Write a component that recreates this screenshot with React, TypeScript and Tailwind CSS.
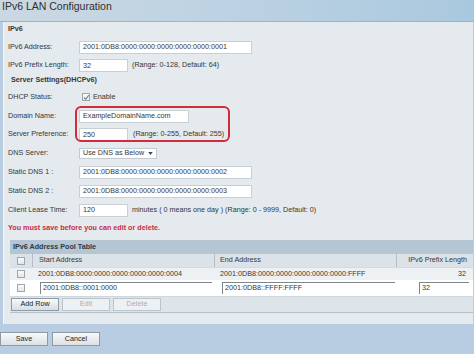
import React from "react";

const FONT = "font-['Liberation_Sans',Arial,sans-serif]";

function Check({ checked = false }: { checked?: boolean }) {
  return (
    <span className="relative inline-block h-[8px] w-[8px] shrink-0 border border-[#9ea7ae] bg-gradient-to-b from-[#fbfbfb] to-[#e3e6e8]">
      {checked && (
        <svg viewBox="0 0 8 8" className="absolute left-0 top-0 h-[7px] w-[7px]">
          <path d="M1.2 4.2 L3 6 L6.6 1.4" fill="none" stroke="#6f777d" strokeWidth="1.2" />
        </svg>
      )}
    </span>
  );
}

function Field({ w, value }: { w: string; value: string }) {
  return (
    <div className={`${w} flex h-[13px] shrink-0 items-center border border-[#c8cfd5] bg-white pl-[3px] leading-none`}>
      {value}
    </div>
  );
}

function Row({ h, label, children }: { h: string; label: string; children?: React.ReactNode }) {
  return (
    <div className={`${h} flex items-center`}>
      <div className="w-[75px] shrink-0 pl-[4px]">{label}</div>
      {children}
    </div>
  );
}

function Btn({ label, disabled = false, w = "w-[48px]" }: { label: string; disabled?: boolean; w?: string }) {
  return (
    <div
      className={`${w} flex h-[13px] items-center justify-center border ${
        disabled
          ? "border-[#bcc4ca] bg-[#eef1f3] text-[#a9afb4]"
          : "border-[#8f9ca6] bg-gradient-to-b from-[#f7f8f9] to-[#d9dee2] text-[#222]"
      }`}
    >
      {label}
    </div>
  );
}

export default function App() {
  return (
    <div className={`h-[354px] w-[474px] overflow-hidden bg-[#b8cde1] text-[7.2px] text-[#363636] ${FONT}`}>
      {/* title bar */}
      <div className="h-[22px] border-b border-[#9fb3c3] bg-gradient-to-r from-[#cbd8e2] via-[#bcd2e2] to-[#a9c8df] pl-[2px] text-[10.5px] leading-[13px] text-[#2f2f2f]">
        IPv6 LAN Configuration
      </div>

      {/* main panel */}
      <div className="ml-[3px] w-[470px] border-l border-[#f3f6f8] bg-[#e4eaee] pb-[11px]">
        <div className="flex h-[15px] items-center pl-[4px] font-bold">IPv6</div>
        <Row h="h-[20px]" label="IPv6 Address:">
          <Field w="w-[173px]" value="2001:0DB8:0000:0000:0000:0000:0000:0001" />
        </Row>
        <Row h="h-[17px]" label="IPv6 Prefix Length:">
          <Field w="w-[49px]" value="32" />
          <span className="ml-[4px]">(Range: 0-128, Default: 64)</span>
        </Row>
        <div className="flex h-[13px] items-center pl-[7px] font-bold">Server Settings(DHCPv6)</div>
        <Row h="h-[20px]" label="DHCP Status:">
          <span className="ml-[3px] flex items-center gap-[3px]">
            <Check checked />
            <span>Enable</span>
          </span>
        </Row>

        <div className="relative">
          <Row h="h-[18px]" label="Domain Name:">
            <Field w="w-[110px]" value="ExampleDomainName.com" />
          </Row>
          <Row h="h-[19px]" label="Server Preference:">
            <Field w="w-[49px]" value="250" />
            <span className="ml-[5px]">(Range: 0-255, Default: 255)</span>
          </Row>
          <div className="absolute left-[71px] top-[-1px] h-[36px] w-[155px] rounded-[6px] border-2 border-[#d42b3c]" />
        </div>

        <Row h="h-[18px]" label="DNS Server:">
          <div className="flex h-[11px] w-[78px] items-center border border-[#c3cad0] bg-white pl-[3px]">
            <span>Use DNS as Below</span>
            <svg viewBox="0 0 6 4" className="ml-[4px] h-[3px] w-[5px]">
              <path d="M0 0 H6 L3 4 Z" fill="#444" />
            </svg>
          </div>
        </Row>
        <Row h="h-[20px]" label="Static DNS 1 :">
          <Field w="w-[173px]" value="2001:0DB8:0000:0000:0000:0000:0000:0002" />
        </Row>
        <Row h="h-[18px]" label="Static DNS 2 :">
          <Field w="w-[173px]" value="2001:0DB8:0000:0000:0000:0000:0000:0003" />
        </Row>
        <Row h="h-[20px]" label="Client Lease Time:">
          <Field w="w-[49px]" value="120" />
          <span className="ml-[4px]">minutes ( 0 means one day ) (Range: 0 - 9999, Default: 0)</span>
        </Row>
        <div className="flex h-[17px] items-center pl-[4px] font-bold text-[#cc2a45]">
          You must save before you can edit or delete.
        </div>

        {/* pool table */}
        <div className="ml-[6px] mt-[3px] border-b border-[#b5c0c9]">
          <div className="flex h-[14px] items-center bg-[#b4c5d3] pl-[3px] font-bold text-[#2d3945]">
            IPv6 Address Pool Table
          </div>
          <div className="grid grid-cols-[23px_182px_182px_1fr]">
            <div className="flex h-[13px] items-center border-r border-[#b3bec7] bg-[#dbe3e9] pl-[7px]">
              <Check />
            </div>
            <div className="flex items-center border-r border-[#b3bec7] bg-[#dbe3e9] pl-[6px]">Start Address</div>
            <div className="flex items-center border-r border-[#b3bec7] bg-[#dbe3e9] pl-[5px]">End Address</div>
            <div className="flex items-center justify-end bg-[#dbe3e9] pr-[6px]">IPv6 Prefix Length</div>

            <div className="flex h-[13px] items-center border-t border-[#d3dae0] bg-[#edf1f4] pl-[7px]">
              <Check />
            </div>
            <div className="flex items-center border-t border-[#d3dae0] bg-[#edf1f4] pl-[5px]">
              2001:0DB8:0000:0000:0000:0000:0000:0004
            </div>
            <div className="flex items-center border-t border-[#d3dae0] bg-[#edf1f4] pl-[5px]">
              2001:0DB8:0000:0000:0000:0000:0000:FFFF
            </div>
            <div className="flex items-center justify-end border-t border-[#d3dae0] bg-[#edf1f4] pr-[7px]">32</div>

            <div className="flex h-[16px] items-center bg-white pl-[7px]">
              <Check />
            </div>
            <div className="flex items-center bg-white pl-[7px]">
              <div className="flex h-[12px] w-[172px] items-center border-l border-t border-[#7f878d] pl-[2px]">
                2001:0DB8::0001:0000
              </div>
            </div>
            <div className="flex items-center bg-white pl-[7px]">
              <div className="flex h-[12px] w-[173px] items-center border-l border-t border-[#7f878d] pl-[2px]">
                2001:0DB8::FFFF:FFFF
              </div>
            </div>
            <div className="flex items-center bg-white pl-[22px]">
              <div className="flex h-[12px] w-[50px] items-center border-l border-t border-[#7f878d] pl-[2px]">32</div>
            </div>
          </div>
          <div className="flex h-[16px] items-center gap-[3px] border-t border-[#cfd7de] bg-[#dde4ea] pl-[1px]">
            <Btn label="Add Row" />
            <Btn label="Edit" disabled />
            <Btn label="Delete" disabled />
          </div>
        </div>
      </div>

      <div className="mt-[8px] flex gap-[4px]">
        <div className="flex h-[14px] w-[48px] items-center justify-center border border-[#8e9ba5] bg-gradient-to-b from-[#f8f9fa] to-[#dce1e5] text-[#222]">
          Save
        </div>
        <div className="flex h-[14px] w-[48px] items-center justify-center border border-[#8e9ba5] bg-gradient-to-b from-[#f8f9fa] to-[#dce1e5] text-[#222]">
          Cancel
        </div>
      </div>
    </div>
  );
}
